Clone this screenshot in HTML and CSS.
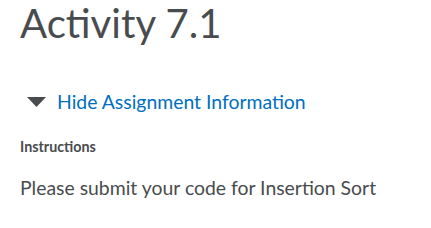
FILE: index.html
```html
<!DOCTYPE html>
<html>
<head>
<meta charset="utf-8">
<link rel="stylesheet" href="styles.css">
</head>
<body>
<div class="page">
  <h1 class="title">Activity 7.1</h1>
  <div class="toggle">
    <svg class="caret" width="19" height="10" viewBox="0 0 19 10"><path d="M0 0 L19 0 L9.5 10 Z" fill="#494c4e"/></svg>
    <span class="toggle-link">Hide Assignment Information</span>
  </div>
  <div class="label">Instructions</div>
  <p class="body-text">Please submit your code for Insertion Sort</p>
</div>
</body>
</html>
```
FILE: styles.css
```css
html, body { margin: 0; padding: 0; background: #fff; }
body { font-family: Lato, "Open Sans", sans-serif; color: #494c4e; }
.page { padding: 0 20px; }
.title { margin: 0; font-size: 40.2px; font-weight: 400; line-height: 46px; }
.toggle { display: flex; align-items: center; margin-top: 43px; padding-left: 7px; gap: 11px; }
.caret { display: block; }
.toggle-link { color: #006fbf; font-size: 19.4px; line-height: 26px; }
.label { margin-top: 22px; font-size: 14.3px; font-weight: 700; line-height: 20px; }
.body-text { margin: 18px 0 0; font-size: 19.4px; line-height: 26px; }
```
